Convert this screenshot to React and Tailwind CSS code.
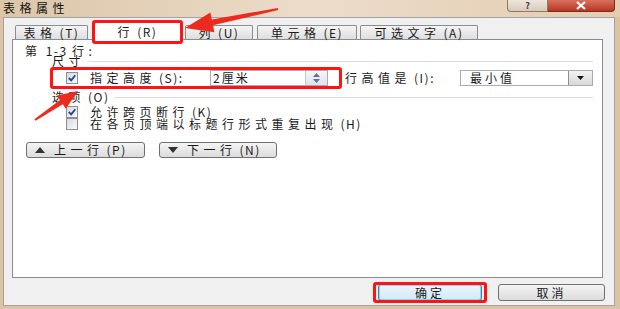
const FONT = "font-['Noto_Sans_CJK_SC','Liberation_Sans',sans-serif]";

const TABS = [
  { cjk: '表格', k: 'T', w: 'w-[73px]', ml: 'ml-[11px]' },
  { cjk: '行', k: 'R', w: 'w-[87px]', ml: 'ml-[6px]', active: true },
  { cjk: '列', k: 'U', w: 'w-[68px]', ml: 'ml-[4px]' },
  { cjk: '单元格', k: 'E', w: 'w-[100px]', ml: 'ml-[4px]' },
  { cjk: '可选文字', k: 'A', w: 'w-[118px]', ml: 'ml-[3px]' },
];

// CJK label followed by the compact "(X)" access key
function Lbl({ cjk, k, colon }) {
  return (
    <span className="leading-[10px] whitespace-nowrap">
      {cjk}
      <span className="ml-[3px] tracking-[1.5px]">({k}){colon && ':'}</span>
    </span>
  );
}

function Check({ checked }) {
  return (
    <span className="w-[12px] h-[12px] shrink-0 border border-[#8e8f8f] bg-gradient-to-br from-[#d4d8de] to-[#fbfbfb] flex items-center justify-center">
      {checked && (
        <svg width="10" height="10" viewBox="0 0 10 10">
          <path d="M1.8 5 L4.2 7.4 L8.3 2.2" fill="none" stroke="#27418f" strokeWidth="1.8" />
        </svg>
      )}
    </span>
  );
}

function GroupTitle({ children }) {
  return (
    <div className="flex items-center h-[10px] ml-[39px]">
      {children}
      <span className="flex-1 ml-[4px] mr-[9px] h-px bg-[#dcdcdc]" />
    </div>
  );
}

function Button({ children, className }) {
  return (
    <div className={`h-[16px] border border-[#707070] rounded-[3px] bg-gradient-to-b from-[#f4f4f4] to-[#dcdcdc] flex items-center ${className}`}>
      {children}
    </div>
  );
}

export default function App() {
  return (
    <div className={`relative w-[620px] h-[309px] overflow-hidden bg-[#dcc3a3] text-[12px] leading-[10px] tracking-[4.5px] text-[#1a1a1a] ${FONT}`}>
      {/* Title bar */}
      <div className="h-[17px] flex items-start bg-gradient-to-r from-[#dcc6a9] via-[#ecdcc9] to-[#e4cdb1]">
        <span className="ml-[3px] mt-[2px] text-[12px] leading-[12px] tracking-[4.5px] text-[#111]">表格属性</span>
        <div className="ml-auto mr-[5px] flex">
          <div className="w-[41px] h-[12px] rounded-bl-[4px] border border-t-0 border-[#8a7a68] bg-gradient-to-b from-[#efe6dc] to-[#d8cabb] flex items-center justify-center text-[9px] leading-[9px] tracking-normal text-[#3a3a3a] font-bold">?</div>
          <div className="w-[67px] h-[12px] rounded-br-[4px] border border-t-0 border-l-0 border-[#7a2e22] bg-gradient-to-b from-[#d9705c] to-[#b8341f] flex items-center justify-center">
            <svg width="14" height="9" viewBox="0 0 14 9">
              <path d="M3 1 L11 8 M11 1 L3 8" stroke="#fff" strokeWidth="2.2" />
            </svg>
          </div>
        </div>
      </div>

      {/* Dialog body */}
      <div className="ml-[3px] w-[612px] h-[289px] bg-[#f0f0f0] border border-[#a3a3a3]">
        {/* Tabs */}
        <div className="flex items-end h-[21px]">
          {TABS.map(t => (
            t.active ? (
              <div key={t.k} className={`relative z-10 -mb-px h-[19px] ${t.w} ${t.ml} bg-white border border-b-0 border-[#898c95] rounded-t-[2px] flex items-center justify-center pt-[1px]`}>
                <Lbl cjk={t.cjk} k={t.k} />
                <span className="absolute -left-[3px] -right-[3px] -top-[2px] -bottom-[4px] border-[3px] border-[#ff1414] rounded-[3px]" />
              </div>
            ) : (
              <div key={t.k} className={`h-[14px] ${t.w} ${t.ml} bg-gradient-to-b from-[#f5f5f5] to-[#dedede] border border-b-0 border-[#898c95] rounded-t-[2px] flex items-center justify-center`}>
                <Lbl cjk={t.cjk} k={t.k} />
              </div>
            )
          ))}
        </div>

        {/* Panel */}
        <div className="ml-[8px] w-[591px] h-[239px] bg-white border border-[#898c95] flex flex-col">
          <div className="mt-[6px] ml-[12px] h-[10px]">
            第<span className="tracking-[1.5px]"> 1-3 </span>行:
          </div>
          <GroupTitle><span>尺寸</span></GroupTitle>

          {/* Size row */}
          <div className="mt-[1px] h-[22px] flex items-center">
            <div className="ml-[37px] w-[292px] h-[22px] border-[3px] border-[#ff1414] rounded-[3px] flex items-center pl-[13px] pr-[11px]">
              <Check checked />
              <span className="ml-[12px]"><Lbl cjk="指定高度" k="S" colon /></span>
              <div className="ml-auto w-[118px] h-[16px] border border-[#a9abb0] bg-white flex items-center">
                <span className="ml-[2px] tracking-[2px]">2厘米</span>
                <div className="ml-auto w-[22px] h-[14px] border-l border-[#c5c8ce] bg-gradient-to-b from-[#f3f5f8] to-[#dfe4ea] flex flex-col items-center justify-center gap-[2px]">
                  <svg width="7" height="4" viewBox="0 0 7 4"><path d="M0 4 L3.5 0 L7 4 Z" fill="#5d7396" /></svg>
                  <svg width="7" height="4" viewBox="0 0 7 4"><path d="M0 0 L3.5 4 L7 0 Z" fill="#5d7396" /></svg>
                </div>
              </div>
            </div>
            <span className="ml-[3px]"><Lbl cjk="行高值是" k="I" colon /></span>
            <div className="ml-auto mr-[9px] w-[133px] h-[16px] border border-[#a9abb0] bg-white flex items-center">
              <span className="ml-[9px] tracking-[3px]">最小值</span>
              <div className="ml-auto w-[24px] h-[14px] border-l border-[#8e8f8f] bg-gradient-to-b from-[#f2f2f2] to-[#d8d8d8] flex items-center justify-center">
                <svg width="7" height="4" viewBox="0 0 7 4"><path d="M0 0 L3.5 4 L7 0 Z" fill="#111" /></svg>
              </div>
            </div>
          </div>

          <div className="mt-[3px]">
            <GroupTitle><Lbl cjk="选项" k="O" /></GroupTitle>
          </div>

          <div className="mt-[4px] ml-[53px] h-[12px] flex items-center">
            <Check checked />
            <span className="ml-[12px]"><Lbl cjk="允许跨页断行" k="K" /></span>
          </div>
          <div className="ml-[53px] h-[12px] flex items-center">
            <Check />
            <span className="ml-[12px]"><Lbl cjk="在各页顶端以标题行形式重复出现" k="H" /></span>
          </div>

          <div className="mt-[12px] flex">
            <Button className="ml-[13px] w-[119px]">
              <svg className="ml-[8px]" width="10" height="6" viewBox="0 0 10 6"><path d="M0 6 L5 0 L10 6 Z" fill="#333" /></svg>
              <span className="ml-[9px]"><Lbl cjk="上一行" k="P" /></span>
            </Button>
            <Button className="ml-[14px] w-[118px]">
              <svg className="ml-[8px]" width="10" height="6" viewBox="0 0 10 6"><path d="M0 0 L5 6 L10 0 Z" fill="#333" /></svg>
              <span className="ml-[9px]"><Lbl cjk="下一行" k="N" /></span>
            </Button>
          </div>
        </div>

        {/* Footer buttons */}
        <div className="mt-[6px] flex">
          <div className="relative ml-[374px] w-[104px] h-[17px] rounded-[3px] border border-[#3c7fb1] bg-gradient-to-b from-[#eaf6fd] to-[#d5e9f7] shadow-[inset_0_0_0_1px_#8fd3f5] flex items-center justify-center tracking-[3px]">
            确定
            <span className="absolute -left-[6px] -right-[6px] -top-[3px] -bottom-[3px] border-[3px] border-[#ff1414] rounded-[3px]" />
          </div>
          <div className="ml-[16px] w-[107px] h-[17px] rounded-[3px] border border-[#707070] bg-gradient-to-b from-[#f4f4f4] to-[#dcdcdc] flex items-center justify-center tracking-[3px]">
            取消
          </div>
        </div>
      </div>

      {/* Annotation arrows */}
      <svg className="absolute inset-0 pointer-events-none" width="620" height="309" viewBox="0 0 620 309">
        <polygon fill="#ee2a1f" points="185,28 210.4,12.4 211.8,19.5 277.8,8 278.2,10 213,25.3 214.4,32.2" />
        <polygon fill="#ee2a1f" points="78,91 56.9,95.6 60,100.1 34.4,119.2 35.6,120.8 62.8,104.3 65.9,108.8" />
      </svg>
    </div>
  );
}
